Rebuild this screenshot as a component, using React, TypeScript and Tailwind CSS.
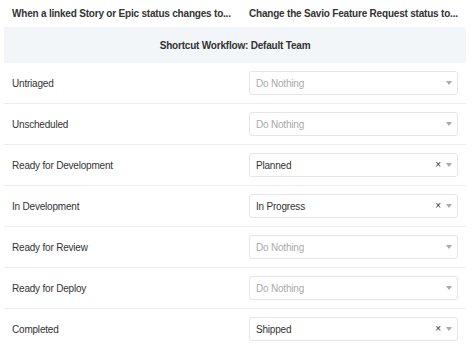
const rows = [
  { name: "Untriaged", value: null },
  { name: "Unscheduled", value: null },
  { name: "Ready for Development", value: "Planned" },
  { name: "In Development", value: "In Progress" },
  { name: "Ready for Review", value: null },
  { name: "Ready for Deploy", value: null },
  { name: "Completed", value: "Shipped" },
];

const Select = ({ value }: { value: string | null }) => (
  <div className="flex h-[24px] items-center rounded-[3px] border border-[#e6e6e6] bg-white pl-[6px] pr-[5px]">
    <span className={value ? "flex-1 text-[#333]" : "flex-1 text-[#aaa]"}>
      {value ?? "Do Nothing"}
    </span>
    {value && <span className="mr-[5px] text-[10px] leading-none text-[#333]">×</span>}
    <span className="h-0 w-0 border-x-[3px] border-t-[4px] border-x-transparent border-t-[#aaa]" />
  </div>
);

export default function App() {
  return (
    <div
      className="h-[348px] w-[474px] overflow-hidden bg-white px-[4px] text-[10px] tracking-[-0.02em] text-[#333]"
      style={{ fontFamily: '"Liberation Sans", Arial, sans-serif' }}
    >
      <div className="w-[462px]">
        <div className="grid h-[27px] grid-cols-[237px_1fr] items-center whitespace-nowrap font-bold">
          <div className="pl-[8px]">When a linked Story or Epic status changes to...</div>
          <div className="pl-[8px]">Change the Savio Feature Request status to...</div>
        </div>
        <div className="flex h-[36px] items-center justify-center bg-[#f2f6f9] font-bold">
          Shortcut Workflow: Default Team
        </div>
        {rows.map((r) => (
          <div
            key={r.name}
            className="grid grid-cols-[237px_1fr] items-center border-b border-[#eeeeee] py-[8px] first:pt-[9px] last:border-b-0"
          >
            <div className="pl-[8px]">{r.name}</div>
            <div className="px-[8px]">
              <Select value={r.value} />
            </div>
          </div>
        ))}
      </div>
    </div>
  );
}
